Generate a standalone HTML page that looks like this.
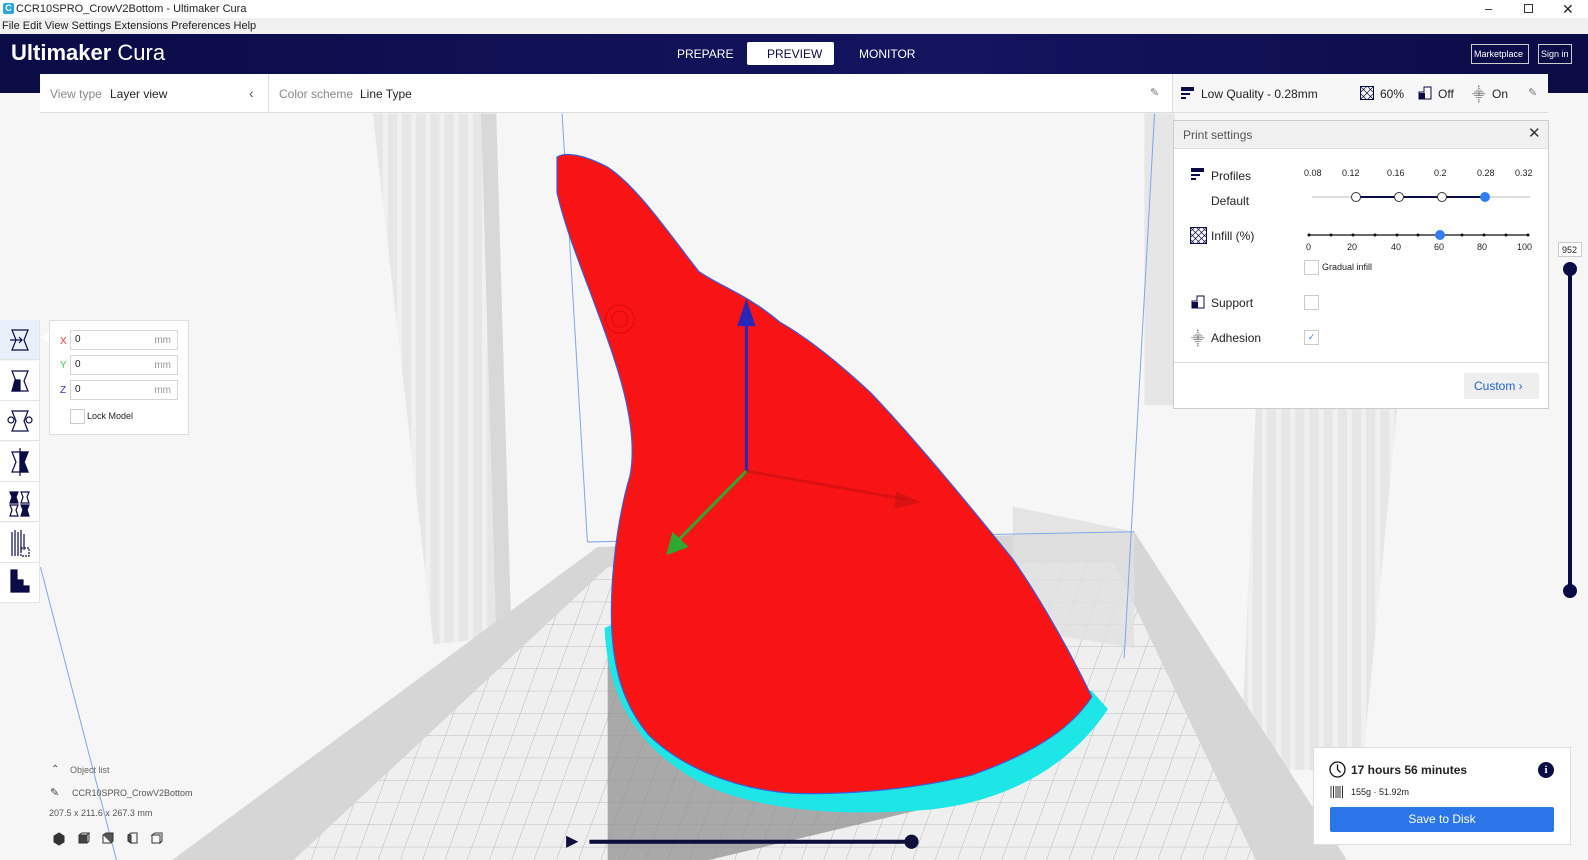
<!DOCTYPE html>
<html><head><meta charset="utf-8">
<style>
*{box-sizing:border-box;margin:0;padding:0}
body{width:1588px;height:860px;overflow:hidden;position:relative;background:#f6f6f6;font-family:"Liberation Sans","DejaVu Sans",sans-serif;color:#222}
.abs{position:absolute}
.t{font-size:12px;white-space:nowrap}
.panel{background:#fff;border:1px solid #ddd}
.tool{position:absolute;left:0;width:40px;height:40px;background:#fff;border-bottom:1px solid #e4e4e4;border-right:1px solid #e4e4e4}
.inp{position:absolute;left:70px;width:108px;height:20px;border:1px solid #d6d6d6;background:#fff;font-size:10px;padding:3px 4px}
.inp span{position:absolute;right:6px;top:4px;color:#999}
.cb{position:absolute;width:15px;height:15px;border:1px solid #ccc;background:#fff}
</style></head><body>

<svg class="abs" style="left:0;top:0" width="1588" height="860" viewBox="0 0 1568 849" preserveAspectRatio="none">
<defs>
<pattern id="g" width="22" height="22" patternUnits="userSpaceOnUse" patternTransform="skewX(-20)">
<rect width="22" height="22" fill="#efefef"/><path d="M0 0H22M0 0V22" stroke="#a9a9a9" stroke-width="0.8"/></pattern>
<pattern id="pl" width="14" height="10" patternUnits="userSpaceOnUse"><rect width="14" height="10" fill="#e6e6e6"/><rect x="0" width="5" height="10" fill="#f0f0f0"/></pattern>
</defs>
<rect width="1568" height="849" fill="#f6f6f6"/>
<polygon points="368,112 490,112 505,628 428,636" fill="url(#pl)"/>
<polygon points="475,112 490,112 505,628 490,628" fill="#d8d8d8"/>
<polygon points="1240,400 1380,400 1345,760 1225,760" fill="url(#pl)"/>
<polygon points="1130,112 1160,112 1160,400 1130,400" fill="#e6e6e6"/>
<polygon points="170,849 590,540 1120,525 1330,849" fill="#d6d6d6"/>
<polygon points="290,849 600,560 1100,555 1240,849" fill="url(#g)"/>
<polygon points="600,650 1010,640 1060,720 990,780 700,849 600,849" fill="#8c8c8c" opacity="0.7"/>
<polygon points="1000,500 1120,525 1120,640 1000,620" fill="#e0e0e0" opacity="0.8"/>
<path d="M40,560 L115,849 M555,112 L580,535 M1140,112 L1110,650 M580,535 L1120,525" stroke="#7fa8e8" stroke-width="1" fill="none"/>
<path d="M597,620 C600,690 630,742 700,777 C760,802 840,806 920,799 C1000,790 1060,752 1094,700 L1078,682 L640,600 Z" fill="#1fe6e6"/>
<path d="M550,155 C558,150 575,152 600,165 C630,185 660,230 690,268 C710,282 740,292 770,318 C800,335 830,360 860,388 C900,430 950,490 1000,552 C1030,595 1060,650 1078,688 C1060,715 1030,740 960,765 C900,780 830,785 780,783 C720,778 670,755 640,725 C615,695 606,660 604,620 C602,570 610,510 622,470 C628,440 622,400 605,350 C585,290 560,235 550,190Z" fill="#f81414" stroke="#3a5cd8" stroke-width="1.2"/>
<circle cx="612" cy="315" r="14" fill="none" stroke="#c00" stroke-width="1" opacity="0.6"/>
<circle cx="612" cy="315" r="8" fill="none" stroke="#c00" stroke-width="1" opacity="0.6"/>
<path d="M737,465 L737,315" stroke="#2626b8" stroke-width="3"/><polygon points="728,322 737,295 746,322" fill="#2626b8"/>
<path d="M737,465 L668,535" stroke="#2ea82e" stroke-width="3"/><polygon points="658,548 664,525 680,540" fill="#2ea82e"/>
<path d="M737,465 L895,493" stroke="#c81010" stroke-width="3" opacity="0.6"/><polygon points="910,496 885,485 883,502" fill="#c81010" opacity="0.6"/>
<polygon points="559,825 571,831 559,837" fill="#0f0f3e"/>
<rect x="582" y="829" width="318" height="4" fill="#0f0f3e"/>
<circle cx="900" cy="831" r="7" fill="#0f0f3e"/>
</svg>

<div class="abs" style="left:0;top:0;width:1588px;height:18px;background:#fff"></div>
<div class="abs" style="left:3px;top:3px;width:11px;height:11px;background:#2aa7de;border-radius:2px;color:#fff;font-size:9px;font-weight:bold;line-height:11px;text-align:center">C</div>
<div class="abs t" style="left:16px;top:3px;font-size:11px">CCR10SPRO_CrowV2Bottom - Ultimaker Cura</div>
<div class="abs t" style="left:1485px;top:1px;font-size:13px">–</div>
<div class="abs" style="left:1524px;top:4px;width:9px;height:9px;border:1px solid #333"></div>
<div class="abs t" style="left:1562px;top:1px;font-size:14px">✕</div>
<div class="abs" style="left:0;top:18px;width:1588px;height:16px;background:#f0f0f0"></div>
<div class="abs t" style="left:2px;top:20px;font-size:11px">File Edit View Settings Extensions Preferences Help</div>
<div class="abs" style="left:0;top:34px;width:1588px;height:40px;background:linear-gradient(90deg,#0b0b46,#141460 60%,#0b0b46)"></div>
<div class="abs" style="left:0;top:74px;width:40px;height:19px;background:#0b0b46"></div>
<div class="abs" style="left:1548px;top:74px;width:40px;height:19px;background:#0b0b46"></div>
<div class="abs t" style="left:11px;top:40px;font-size:22px;color:#fff"><b>Ultimaker</b> Cura</div>
<div class="abs t" style="left:677px;top:47px;color:#fff">PREPARE</div>
<div class="abs" style="left:747px;top:42px;width:87px;height:23px;background:#fff;border-radius:2px"></div>
<div class="abs t" style="left:767px;top:47px;color:#0b0b46">PREVIEW</div>
<div class="abs t" style="left:859px;top:47px;color:#fff">MONITOR</div>
<div class="abs t" style="left:1471px;top:44px;width:58px;height:20px;border:1px solid #ccc;color:#fff;font-size:9px;padding:4px 2px;overflow:hidden">Marketplace</div>
<div class="abs t" style="left:1538px;top:44px;width:34px;height:20px;border:1px solid #ccc;color:#fff;font-size:9px;padding:4px 2px;overflow:hidden">Sign in</div>
<div class="abs" style="left:40px;top:74px;width:1132px;height:39px;background:#fff;border-bottom:1px solid #ddd"></div>
<div class="abs" style="left:268px;top:74px;width:1px;height:39px;background:#ddd"></div>
<div class="abs t" style="left:50px;top:87px;color:#888">View type</div>
<div class="abs t" style="left:110px;top:87px">Layer view</div>
<div class="abs t" style="left:249px;top:85px;font-size:14px;color:#555">‹</div>
<div class="abs t" style="left:279px;top:87px;color:#888">Color scheme</div>
<div class="abs t" style="left:360px;top:87px">Line Type</div>
<div class="abs t" style="left:1150px;top:86px;font-size:11px;color:#777">✎</div>
<div class="abs" style="left:1172px;top:74px;width:376px;height:39px;background:#f7f7f7;border-bottom:1px solid #ddd;border-left:1px solid #ddd"></div>
<svg class="abs" style="left:1181px;top:86px" width="14" height="14"><rect x="0" y="1" width="13" height="4" fill="#0b0b46"/><rect x="0" y="7" width="9" height="2" fill="#0b0b46"/><rect x="0" y="11" width="5" height="2" fill="#0b0b46"/></svg>
<div class="abs t" style="left:1201px;top:87px">Low Quality - 0.28mm</div>
<svg class="abs" style="left:1360px;top:86px" width="14" height="14"><rect x="0.5" y="0.5" width="13" height="13" fill="none" stroke="#0b0b46"/><path d="M0 7L7 0 14 7 7 14Z M0 0L14 14M14 0L0 14" stroke="#0b0b46" fill="none" stroke-width=".7"/></svg>
<div class="abs t" style="left:1380px;top:87px">60%</div>
<svg class="abs" style="left:1418px;top:86px" width="14" height="14"><path d="M1 13V6H6V1H13V13Z" fill="none" stroke="#0b0b46"/><rect x="1" y="7" width="6" height="6" fill="#0b0b46"/></svg>
<div class="abs t" style="left:1438px;top:87px">Off</div>
<div class="abs t" style="left:1472px;top:85px;font-size:13px;color:#555">⸎</div>
<div class="abs t" style="left:1492px;top:87px">On</div>
<div class="abs t" style="left:1528px;top:86px;font-size:11px;color:#777">✎</div>

<div class="abs panel" style="left:1173px;top:120px;width:376px;height:289px;border-color:#ccc"></div>
<div class="abs" style="left:1174px;top:121px;width:374px;height:28px;background:#f0f0f0;border-bottom:1px solid #ddd"></div>
<div class="abs t" style="left:1183px;top:128px;color:#555">Print settings</div>
<div class="abs t" style="left:1528px;top:124px;font-size:15px;font-weight:bold;color:#333">✕</div>
<svg class="abs" style="left:1191px;top:168px" width="14" height="14"><rect x="0" y="0" width="13" height="4" fill="#0b0b46"/><rect x="0" y="6" width="9" height="2" fill="#0b0b46"/><rect x="0" y="10" width="5" height="2" fill="#0b0b46"/></svg>
<div class="abs t" style="left:1211px;top:169px">Profiles</div>
<div class="abs t" style="left:1211px;top:194px">Default</div>
<div class="abs t" style="left:1304px;top:168px;font-size:9px">0.08</div>
<div class="abs t" style="left:1342px;top:168px;font-size:9px">0.12</div>
<div class="abs t" style="left:1387px;top:168px;font-size:9px">0.16</div>
<div class="abs t" style="left:1434px;top:168px;font-size:9px">0.2</div>
<div class="abs t" style="left:1477px;top:168px;font-size:9px">0.28</div>
<div class="abs t" style="left:1515px;top:168px;font-size:9px">0.32</div>
<svg class="abs" style="left:1300px;top:185px" width="240" height="100">
<line x1="12" y1="12" x2="230" y2="12" stroke="#ddd" stroke-width="2"/>
<line x1="56" y1="12" x2="185" y2="12" stroke="#0b0b46" stroke-width="2"/>
<circle cx="56" cy="12" r="4.5" fill="#fff" stroke="#333"/><circle cx="99" cy="12" r="4.5" fill="#fff" stroke="#333"/><circle cx="142" cy="12" r="4.5" fill="#fff" stroke="#333"/><circle cx="185" cy="12" r="5" fill="#2f7ff2"/>
<line x1="9" y1="50" x2="228" y2="50" stroke="#111" stroke-width="1.3"/>
<g fill="#111"><circle cx="9" cy="50" r="1.5"/><circle cx="31" cy="50" r="1.5"/><circle cx="53" cy="50" r="1.5"/><circle cx="75" cy="50" r="1.5"/><circle cx="97" cy="50" r="1.5"/><circle cx="118" cy="50" r="1.5"/><circle cx="162" cy="50" r="1.5"/><circle cx="184" cy="50" r="1.5"/><circle cx="206" cy="50" r="1.5"/><circle cx="228" cy="50" r="1.5"/></g>
<circle cx="140" cy="50" r="5" fill="#2f7ff2"/>
</svg>
<svg class="abs" style="left:1190px;top:227px" width="17" height="17"><rect x="0.5" y="0.5" width="16" height="16" fill="none" stroke="#0b0b46"/><path d="M0 5L5 0M0 11L11 0M0 17L17 0M6 17L17 6M12 17L17 12M12 0L17 5M6 0L17 11M0 0L17 17M0 6L11 17M0 12L5 17" stroke="#0b0b46" stroke-width=".7"/></svg>
<div class="abs t" style="left:1211px;top:229px">Infill (%)</div>
<div class="abs t" style="left:1306px;top:242px;font-size:9px">0</div>
<div class="abs t" style="left:1347px;top:242px;font-size:9px">20</div>
<div class="abs t" style="left:1391px;top:242px;font-size:9px">40</div>
<div class="abs t" style="left:1434px;top:242px;font-size:9px">60</div>
<div class="abs t" style="left:1477px;top:242px;font-size:9px">80</div>
<div class="abs t" style="left:1517px;top:242px;font-size:9px">100</div>
<div class="cb" style="left:1304px;top:260px"></div>
<div class="abs t" style="left:1322px;top:262px;font-size:9px">Gradual infill</div>
<svg class="abs" style="left:1191px;top:295px" width="14" height="14"><path d="M1 13V6H6V1H13V13Z" fill="none" stroke="#0b0b46"/><rect x="1" y="7" width="6" height="6" fill="#0b0b46"/></svg>
<div class="abs t" style="left:1211px;top:296px">Support</div>
<div class="cb" style="left:1304px;top:295px"></div>
<div class="abs t" style="left:1191px;top:329px;font-size:13px;color:#555">⸎</div>
<div class="abs t" style="left:1211px;top:331px">Adhesion</div>
<div class="cb" style="left:1304px;top:330px;color:#2f7ff2;font-size:9px;text-align:center;line-height:13px">✓</div>
<div class="abs" style="left:1174px;top:362px;width:374px;height:1px;background:#ddd"></div>
<div class="abs" style="left:1464px;top:373px;width:75px;height:26px;background:#eeeeee"></div>
<div class="abs t" style="left:1474px;top:379px;color:#1f63c4">Custom ›</div>

<div class="abs t" style="left:1558px;top:242px;width:24px;height:15px;border:1px solid #ccc;background:#fff;font-size:9px;padding:2px 3px">952</div>
<div class="abs" style="left:1568px;top:272px;width:4px;height:320px;background:#0b0b46"></div>
<div class="abs" style="left:1563px;top:262px;width:14px;height:14px;border-radius:50%;background:#0b0b46"></div>
<div class="abs" style="left:1563px;top:584px;width:14px;height:14px;border-radius:50%;background:#0b0b46"></div>

<div class="tool" style="top:320px;background:#e8f0fb"></div>
<div class="tool" style="top:361px"></div>
<div class="tool" style="top:401px"></div>
<div class="tool" style="top:442px"></div>
<div class="tool" style="top:482px"></div>
<div class="tool" style="top:523px"></div>
<div class="tool" style="top:563px"></div>
<svg class="abs" style="left:0;top:320px" width="40" height="283" fill="none" stroke="#0b0b46" stroke-width="1.2">
<path d="M12 10H28L24 20 28 30H12L16 20Z"/><path d="M10 20H22M19 17L22 20 19 23"/>
<path d="M12 51H28L24 61 28 71H12L16 61Z"/><path d="M12 71L15 60H20V71Z" fill="#0b0b46"/>
<path d="M12 91H28L24 101 28 111H12L16 101Z"/><circle cx="11" cy="100" r="3"/><circle cx="29" cy="100" r="3"/>
<path d="M12 132H28L24 142 28 152H12L16 142Z"/><path d="M20 132H28L24 142 28 152H20Z" fill="#0b0b46"/><path d="M20 128V156"/>
<path d="M10 172H18L16 177 18 183H10L12 177Z" fill="#0b0b46"/><path d="M21 172H29L27 177 29 183H21L23 177Z"/><path d="M10 185H18L16 190 18 196H10L12 190Z"/><path d="M21 185H29L27 190 29 196H21L23 190Z" fill="#0b0b46"/>
<path d="M12 212V236M15 210V236M18 212V236M21 210V232M24 214V230"/><rect x="21" y="228" width="8" height="8" stroke-dasharray="2 1"/>
<path d="M11 250H17V260H23V266H29V272H11Z" fill="#0b0b46"/>
</svg>
<div class="abs panel" style="left:49px;top:320px;width:140px;height:115px"></div>
<div class="abs" style="left:43px;top:332px;width:0;height:0;border-top:6px solid transparent;border-bottom:6px solid transparent;border-right:6px solid #fff"></div>
<div class="abs t" style="left:60px;top:336px;font-size:10px;color:#e33">X</div>
<div class="abs t" style="left:60px;top:360px;font-size:10px;color:#4c4">Y</div>
<div class="abs t" style="left:60px;top:385px;font-size:10px;color:#33c">Z</div>
<div class="inp" style="top:330px">0<span>mm</span></div>
<div class="inp" style="top:355px">0<span>mm</span></div>
<div class="inp" style="top:380px">0<span>mm</span></div>
<div class="cb" style="left:70px;top:409px"></div>
<div class="abs t" style="left:87px;top:411px;font-size:9px">Lock Model</div>

<div class="abs t" style="left:51px;top:764px;font-size:10px;color:#444">⌃</div>
<div class="abs t" style="left:70px;top:765px;font-size:9px;color:#666">Object list</div>
<div class="abs t" style="left:50px;top:786px;font-size:11px;color:#444">✎</div>
<div class="abs t" style="left:72px;top:788px;font-size:9px;color:#555">CCR10SPRO_CrowV2Bottom</div>
<div class="abs t" style="left:49px;top:808px;font-size:9px;color:#555">207.5 x 211.6 x 267.3 mm</div>
<svg class="abs" style="left:52px;top:832px" width="115" height="14" fill="none" stroke="#333">
<path d="M2 4L7 1 12 4V10L7 13 2 10Z" fill="#333"/><path d="M27 3H35V11H27Z" fill="#444"/><path d="M27 3L30 1H37L35 3M35 11L37 9V1"/>
<path d="M51 3H59V11H51Z"/><path d="M51 3L54 1H61V9L59 11" fill="#555"/>
<path d="M76 3L79 1H85V11H79L76 9Z"/><path d="M76 3V9L79 11V3Z" fill="#555"/>
<path d="M100 3H108V11H100Z"/><path d="M100 3L103 1H110V9L108 11V3Z"/>
</svg>

<div class="abs panel" style="left:1313px;top:747px;width:258px;height:98px"></div>
<svg class="abs" style="left:1329px;top:761px" width="17" height="17" fill="none" stroke="#111" stroke-width="1.3"><circle cx="8.5" cy="8.5" r="7.5"/><path d="M8.5 3.5V8.5L11.5 11.5"/></svg>
<div class="abs t" style="left:1351px;top:763px;font-size:12px;font-weight:bold">17 hours 56 minutes</div>
<div class="abs" style="left:1538px;top:762px;width:16px;height:16px;border-radius:50%;background:#0b0b46;color:#fff;font-size:11px;font-weight:bold;text-align:center;line-height:16px;font-family:'Liberation Serif',serif">i</div>
<svg class="abs" style="left:1330px;top:785px" width="14" height="14" stroke="#333"><path d="M1 1V13M3.5 1V13M6 1V13M8 1V13M10 1V13M12.5 1V13"/></svg>
<div class="abs t" style="left:1351px;top:787px;font-size:9px">155g · 51.92m</div>
<div class="abs" style="left:1330px;top:807px;width:224px;height:25px;background:#2a75e8;border-radius:2px;color:#fff;font-size:12px;text-align:center;line-height:25px">Save to Disk</div>
</body></html>
